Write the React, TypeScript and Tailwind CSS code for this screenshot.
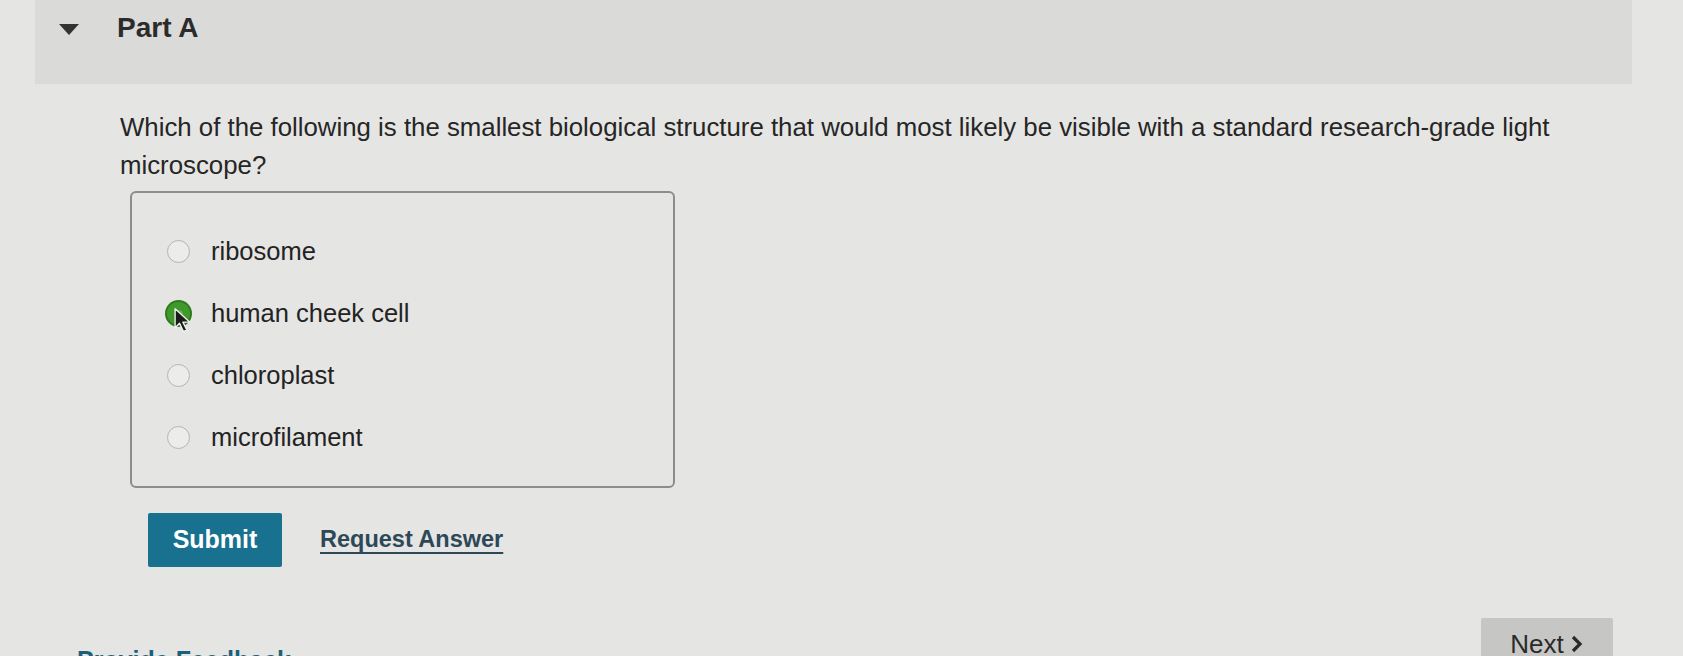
import { useState } from "react";

const options = ["ribosome", "human cheek cell", "chloroplast", "microfilament"];

function Cursor() {
  return (
    <svg
      className="pointer-events-none absolute left-[7px] top-[5px]"
      width="20"
      height="28"
      viewBox="0 0 18 24"
    >
      <path
        d="M1 1 L1 18 L5 14 L8.5 21.5 L11.5 20 L8 13 L14 13 Z"
        fill="#1a1a1a"
        stroke="#f2f2f2"
        strokeWidth="1.2"
        strokeLinejoin="round"
      />
    </svg>
  );
}

function Radio({ checked }: { checked: boolean }) {
  if (checked) {
    return (
      <span className="relative flex h-[23px] w-[23px] shrink-0 items-center justify-center rounded-full bg-[#3f9a2b] ring-2 ring-[#2f7a1f]">
        <span className="h-[8px] w-[8px] rounded-full bg-[#5bb443]" />
        <Cursor />
      </span>
    );
  }
  return (
    <span className="h-[23px] w-[23px] shrink-0 rounded-full border-[1.5px] border-[#b4b4b2] bg-[#ececea]" />
  );
}

export default function App() {
  const [selected, setSelected] = useState(1);

  return (
    <div className="h-[656px] w-full overflow-hidden bg-[#e5e5e3] font-['Liberation_Sans',Arial,sans-serif] text-[#262626]">
      <header className="ml-[35px] flex h-[84px] w-[1597px] items-start bg-[#dadad8] pl-[24px] pt-[14px]">
        <button className="mt-[10px] flex h-[11px] w-[21px] items-start">
          <span className="h-0 w-0 border-x-[10px] border-t-[11px] border-x-transparent border-t-[#333]" />
        </button>
        <h2 className="ml-[37px] text-[28px] font-bold leading-[28px] text-[#2b2b2b]">Part A</h2>
      </header>

      <main className="pl-[120px]">
        <p className="mt-[24px] w-[1500px] text-[25.8px] leading-[38px]">
          Which of the following is the smallest biological structure that would most likely be visible with a standard research-grade light microscope?
        </p>

        <fieldset className="ml-[10px] mt-[7px] flex h-[297px] w-[545px] flex-col gap-[39px] rounded-[6px] border-2 border-[#8d8d8b] pl-[35px] pt-[47px]">
          {options.map((label, i) => (
            <label
              key={label}
              className="flex h-[23px] cursor-pointer items-center gap-[21px] text-[25.5px] leading-[23px] text-[#232323]"
              onClick={() => setSelected(i)}
            >
              <Radio checked={selected === i} />
              <span>{label}</span>
            </label>
          ))}
        </fieldset>

        <div className="ml-[28px] mt-[25px] flex items-center gap-[38px]">
          <button className="h-[54px] w-[134px] rounded-[2px] bg-[#18728f] text-[25px] font-bold text-white">
            Submit
          </button>
          <a className="text-[23.5px] font-bold text-[#2d4858] underline decoration-2 underline-offset-[5px]">
            Request Answer
          </a>
        </div>
      </main>

      <footer className="mt-[51px] flex items-start justify-between pl-[77px] pr-[70px]">
        <span className="mt-[30px] text-[25px] font-bold leading-[25px] text-[#1d5f78]">Provide Feedback</span>
        <button className="flex h-[50px] w-[132px] items-center justify-center gap-[6px] rounded-[2px] bg-[#c6c6c4] pt-[2px] text-[26px] text-[#2a2a2a]">
          Next
          <svg width="14" height="18" viewBox="0 0 14 18">
            <path d="M3 2 L10 9 L3 16" fill="none" stroke="#2a2a2a" strokeWidth="3.2" />
          </svg>
        </button>
      </footer>
    </div>
  );
}
